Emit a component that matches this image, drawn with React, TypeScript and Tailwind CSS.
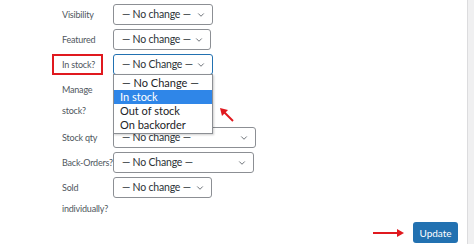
import { ChevronDown } from 'lucide-react';

type SelProps = { text: string; width: string; focus?: boolean };

function FakeSelect({ text, width, focus }: SelProps) {
    return (
        <div
            className={`${width} h-[21px] flex items-center justify-between pl-[8px] pr-[6px] bg-white rounded-[3px] border ${focus ? 'border-[#2271b1]' : 'border-[#8c8f94]'} text-[10.5px] tracking-[-0.2px] text-[#2c3338] leading-none whitespace-nowrap`}
        >
            <span>{text}</span>
            <ChevronDown size={10} strokeWidth={2} className="shrink-0 text-[#50575e]" />
        </div>
    );
}

function Row({ label, children, h = 'h-[21px]' }: { label: React.ReactNode; children?: React.ReactNode; h?: string }) {
    return (
        <div className={`flex items-start ${h}`}>
            <div className="w-[51px] shrink-0 text-[9px] tracking-[-0.2px] text-[#50575e] leading-[21px] whitespace-nowrap">{label}</div>
            {children}
        </div>
    );
}

export default function App() {
    return (
        <div className="w-[474px] h-[244px] flex bg-white overflow-hidden" style={{ fontFamily: 'Lato, "Open Sans", sans-serif' }}>
            <div className="flex-1 relative pl-[62px] pt-[4px] flex flex-col gap-[4px]">
                <Row label="Visibility">
                    <FakeSelect text="— No change —" width="w-[100px]" />
                </Row>
                <Row label="Featured">
                    <FakeSelect text="— No change —" width="w-[98px]" />
                </Row>
                <Row label={<span className="inline-block border-2 border-[#e0191f] -ml-[10px] pl-[8px] w-[51px] leading-[15px] py-[1px]">In stock?</span>}>
                    <FakeSelect text="— No Change —" width="w-[100px]" focus />
                </Row>
                <Row label={<><div>Manage</div><div>stock?</div></>} h="h-[44px]" />
                <Row label="Stock qty">
                    <FakeSelect text="— No change —" width="w-[143px]" />
                </Row>
                <Row label="Back-Orders?">
                    <FakeSelect text="— No Change —" width="w-[141px]" />
                </Row>
                <Row label={<><div>Sold</div><div>individually?</div></>} h="h-[42px]">
                    <FakeSelect text="— No change —" width="w-[99px]" />
                </Row>
                <div className="flex justify-end items-center pr-[9px] -mt-[1px]">
                    <svg width="32" height="8" viewBox="0 0 32 8" className="mr-[8px]">
                        <line x1="0" y1="4" x2="25" y2="4" stroke="#e0191f" strokeWidth="2" />
                        <polygon points="24,0 31,4 24,8" fill="#e0191f" />
                    </svg>
                    <button className="h-[21px] w-[45px] rounded-[3px] bg-[#2271b1] text-white text-[10px] leading-none">Update</button>
                </div>

                {/* open dropdown list */}
                <div className="absolute left-[113px] top-[74px] w-[100px] bg-white border border-[#8c8f94] shadow-[1px_1px_2px_rgba(0,0,0,0.2)] text-[11px] text-[#1d2327] leading-[14px] py-[1px] whitespace-nowrap">
                    <div className="pl-[8px]">— No Change —</div>
                    <div className="pl-[6px] bg-[#2f86e8] text-white">In stock</div>
                    <div className="pl-[6px]">Out of stock</div>
                    <div className="pl-[6px]">On backorder</div>
                </div>
                <svg width="16" height="16" viewBox="0 0 16 16" className="absolute left-[219px] top-[107px]">
                    <line x1="14" y1="14" x2="4" y2="4" stroke="#e0191f" strokeWidth="2" />
                    <polygon points="1,1 9,3 3,9" fill="#e0191f" />
                </svg>
            </div>
            <div className="w-[7px] border-l border-[#dcdcde] bg-[#f0f0f1]" />
        </div>
    );
}
